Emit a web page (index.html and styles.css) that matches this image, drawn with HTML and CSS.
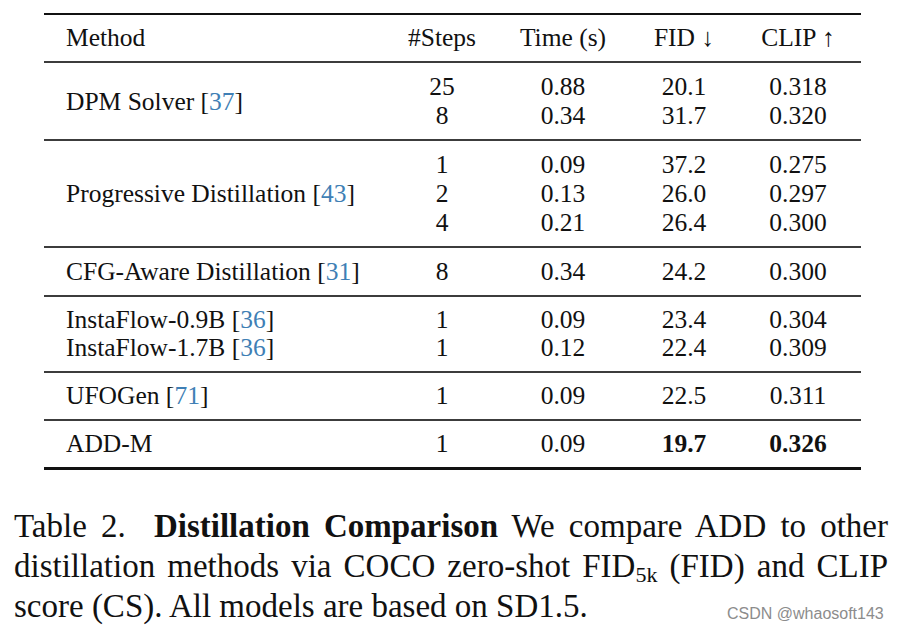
FILE: index.html
```html
<!DOCTYPE html>
<html>
<head>
<meta charset="utf-8">
<link rel="stylesheet" href="styles.css">
</head>
<body>
<div class="page">
  <table class="results">
    <colgroup>
      <col class="c-method">
      <col class="c-steps">
      <col class="c-time">
      <col class="c-fid">
      <col class="c-clip">
    </colgroup>
    <thead>
      <tr>
        <th class="method">Method</th>
        <th>#Steps</th>
        <th>Time (s)</th>
        <th>FID ↓</th>
        <th>CLIP ↑</th>
      </tr>
    </thead>
    <tbody>
      <tr>
        <td class="method">DPM Solver [<span class="cite">37</span>]</td>
        <td>25<br>8</td>
        <td>0.88<br>0.34</td>
        <td>20.1<br>31.7</td>
        <td>0.318<br>0.320</td>
      </tr>
      <tr>
        <td class="method">Progressive Distillation [<span class="cite">43</span>]</td>
        <td>1<br>2<br>4</td>
        <td>0.09<br>0.13<br>0.21</td>
        <td>37.2<br>26.0<br>26.4</td>
        <td>0.275<br>0.297<br>0.300</td>
      </tr>
      <tr>
        <td class="method">CFG-Aware Distillation [<span class="cite">31</span>]</td>
        <td>8</td>
        <td>0.34</td>
        <td>24.2</td>
        <td>0.300</td>
      </tr>
      <tr class="tight">
        <td class="method">InstaFlow-0.9B [<span class="cite">36</span>]<br>InstaFlow-1.7B [<span class="cite">36</span>]</td>
        <td>1<br>1</td>
        <td>0.09<br>0.12</td>
        <td>23.4<br>22.4</td>
        <td>0.304<br>0.309</td>
      </tr>
      <tr class="tight">
        <td class="method">UFOGen [<span class="cite">71</span>]</td>
        <td>1</td>
        <td>0.09</td>
        <td>22.5</td>
        <td>0.311</td>
      </tr>
      <tr class="tight last">
        <td class="method">ADD-M</td>
        <td>1</td>
        <td>0.09</td>
        <td><b>19.7</b></td>
        <td><b>0.326</b></td>
      </tr>
    </tbody>
  </table>
  <p class="caption">Table 2.&nbsp; <b>Distillation Comparison</b> We compare ADD to other distillation methods via COCO zero-shot FID<sub>5k</sub> (FID) and CLIP score (CS). All models are based on SD1.5.</p>
  <div class="watermark">CSDN @whaosoft143</div>
</div>
</body>
</html>
```

FILE: styles.css
```css
html, body {
  margin: 0;
  padding: 0;
  background: #ffffff;
}

.page {
  position: relative;
  width: 901px;
  height: 628px;
  overflow: hidden;
  font-family: "Liberation Serif", "Times New Roman", serif;
  color: #111111;
}

.results {
  margin: 13px 0 0 44px;
  width: 817px;
  border-collapse: collapse;
  table-layout: fixed;
  font-size: 25.5px;
  line-height: 29px;
}

.c-method { width: 347px; }
.c-steps { width: 102px; }
.c-time { width: 140px; }
.c-fid { width: 102px; }
.c-clip { width: 126px; }

.results th,
.results td {
  font-weight: normal;
  text-align: center;
  vertical-align: middle;
  padding: 9px 0;
  white-space: nowrap;
}

.results th {
  padding: 8px 0 9px;
}

.results tr.tight td {
  line-height: 28px;
}

.results th.method,
.results td.method {
  text-align: left;
  padding-left: 22px;
}

.results thead tr {
  border-top: 2px solid #111111;
  border-bottom: 2px solid #3c3c3c;
}

.results tbody tr {
  border-bottom: 2px solid #3c3c3c;
}

.results tbody tr.last {
  border-bottom: 3px solid #111111;
}

.results b {
  font-weight: bold;
}

.cite {
  color: #3f7fb5;
}

.caption {
  margin: 36px 0 0 14px;
  width: 874px;
  font-size: 33px;
  line-height: 40px;
  text-align: justify;
}

.caption sub {
  font-size: 22px;
  line-height: 0;
  vertical-align: -5px;
}

.watermark {
  position: absolute;
  left: 727px;
  top: 605px;
  font-family: "Liberation Sans", Arial, sans-serif;
  font-size: 16px;
  color: #8c8c8c;
}
```
